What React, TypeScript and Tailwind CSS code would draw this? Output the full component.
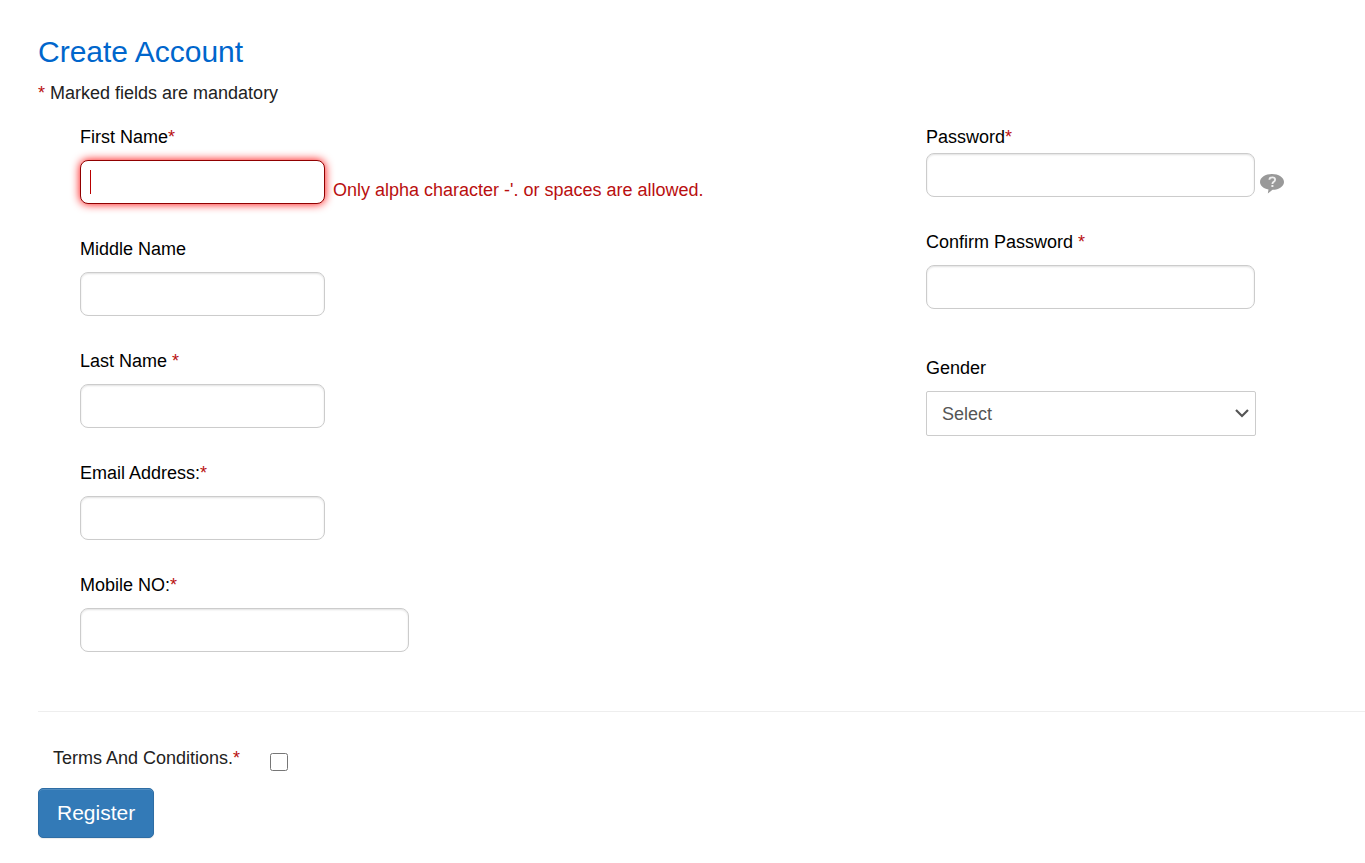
import { useState, type ReactNode } from "react";

const inputBase =
  "block h-11 rounded-lg border bg-white px-[9px] text-lg text-[#555] focus:outline-none";
const inputNormal = "border-[#ccc] shadow-[inset_0_1px_2px_rgba(0,0,0,0.12)]";
const inputError = "border-[#900000] shadow-[0_0_10px_#ff0000]";

function Required() {
  return <span className="text-[#b90f0f]">*</span>;
}

function Label({ id, children }: { id: string; children: ReactNode }) {
  return (
    <label htmlFor={id} className="block text-black">
      {children}
    </label>
  );
}

function HelpIcon() {
  return (
    <svg width="24" height="21" viewBox="0 0 24 21" aria-hidden="true">
      <path
        d="M12 1C5.400 1 0 4.500 0 8.900c0 3.600 3.600 6.600 8.500 7.500L7.800 20.500 12.600 16.800C19 16.600 24 13.200 24 8.900 24 4.500 18.600 1 12 1Z"
        fill="#999"
      />
      <path
        d="M9.400 6.800C9.400 5.300 10.600 4.400 12.200 4.400c1.700 0 2.900 0.900 2.900 2.300 0 2.100-2.700 2-2.700 4.200"
        fill="none"
        stroke="#eee"
        strokeWidth="1.800"
      />
      <rect x="11.400" y="12" width="2" height="2" fill="#eee" />
    </svg>
  );
}

export default function App() {
  const [form, setForm] = useState({
    firstName: "",
    middleName: "",
    lastName: "",
    email: "",
    mobile: "",
    password: "",
    confirm: "",
    gender: "",
  });
  const [accepted, setAccepted] = useState(false);

  function update(name: string, value: string) {
    setForm({ ...form, [name]: value });
  }

  return (
    <form
      onSubmit={(e) => e.preventDefault()}
      className="min-h-screen bg-white pt-[34px] pb-6 pl-[38px] font-['Liberation_Sans',Arial,sans-serif] text-lg leading-[26px] text-[#222]"
    >
      <h1 className="text-[30px] leading-9 text-[#0066cc]">Create Account</h1>
      <p className="mt-2.5">
        <Required /> Marked fields are mandatory
      </p>

      <div className="mt-[18px] grid grid-cols-[1fr_439px] pl-[42px]">
        <div className="flex flex-col gap-8">
          <div className="flex flex-col gap-2.5">
            <Label id="firstName">
              First Name
              <Required />
            </Label>
            <div className="flex items-end gap-2">
              <div className="relative">
                <input
                  id="firstName"
                  type="text"
                  aria-invalid="true"
                  aria-describedby="firstNameError"
                  value={form.firstName}
                  onChange={(e) => update("firstName", e.target.value)}
                  className={`${inputBase} ${inputError} w-[245px]`}
                />
                {form.firstName === "" && (
                  <span className="pointer-events-none absolute top-2.5 left-2.5 h-6 w-px bg-[#b90000]" />
                )}
              </div>
              <span id="firstNameError" className="pb-px text-[#b90f0f]">
                Only alpha character -'. or spaces are allowed.
              </span>
            </div>
          </div>

          <div className="flex flex-col gap-2.5">
            <Label id="middleName">Middle Name</Label>
            <input
              id="middleName"
              type="text"
              value={form.middleName}
              onChange={(e) => update("middleName", e.target.value)}
              className={`${inputBase} ${inputNormal} w-[245px]`}
            />
          </div>

          <div className="flex flex-col gap-2.5">
            <Label id="lastName">
              Last Name <Required />
            </Label>
            <input
              id="lastName"
              type="text"
              value={form.lastName}
              onChange={(e) => update("lastName", e.target.value)}
              className={`${inputBase} ${inputNormal} w-[245px]`}
            />
          </div>

          <div className="flex flex-col gap-2.5">
            <Label id="email">
              Email Address:
              <Required />
            </Label>
            <input
              id="email"
              type="email"
              value={form.email}
              onChange={(e) => update("email", e.target.value)}
              className={`${inputBase} ${inputNormal} w-[245px]`}
            />
          </div>

          <div className="flex flex-col gap-2.5">
            <Label id="mobile">
              Mobile NO:
              <Required />
            </Label>
            <input
              id="mobile"
              type="tel"
              value={form.mobile}
              onChange={(e) => update("mobile", e.target.value)}
              className={`${inputBase} ${inputNormal} w-[329px]`}
            />
          </div>
        </div>

        <div>
          <div className="flex flex-col gap-[3px]">
            <Label id="password">
              Password
              <Required />
            </Label>
            <div className="flex items-end gap-[5px]">
              <input
                id="password"
                type="password"
                value={form.password}
                onChange={(e) => update("password", e.target.value)}
                className={`${inputBase} ${inputNormal} w-[329px]`}
              />
              <button type="button" aria-label="Password help" className="pb-[3px]">
                <HelpIcon />
              </button>
            </div>
          </div>

          <div className="mt-8 flex flex-col gap-2.5">
            <Label id="confirm">
              Confirm Password <Required />
            </Label>
            <input
              id="confirm"
              type="password"
              value={form.confirm}
              onChange={(e) => update("confirm", e.target.value)}
              className={`${inputBase} ${inputNormal} w-[329px]`}
            />
          </div>

          <div className="mt-[46px] flex flex-col gap-2.5">
            <Label id="gender">Gender</Label>
            <div className="relative w-[330px]">
              <select
                id="gender"
                value={form.gender}
                onChange={(e) => update("gender", e.target.value)}
                className="block h-[45px] w-full appearance-none rounded-xs border border-[#ccc] bg-white px-[15px] text-lg text-[#555]"
              >
                <option value="">Select</option>
                <option value="female">Female</option>
                <option value="male">Male</option>
              </select>
              <svg
                className="pointer-events-none absolute top-[18px] right-[7px]"
                width="14"
                height="9"
                viewBox="0 0 14 9"
                fill="none"
                stroke="#555"
                strokeWidth="2.2"
                aria-hidden="true"
              >
                <path d="M1 1l6 6 6-6" />
              </svg>
            </div>
          </div>
        </div>
      </div>

      <hr className="mt-[59px] border-[#eee]" />

      <div className="mt-[33px] flex items-start gap-[30px] pl-[15px]">
        <label htmlFor="terms">
          Terms And Conditions.
          <Required />
        </label>
        <input
          id="terms"
          type="checkbox"
          checked={accepted}
          onChange={(e) => setAccepted(e.target.checked)}
          className="mt-2 size-[18px]"
        />
      </div>

      <button
        type="submit"
        className="mt-[17px] h-[50px] rounded-[5px] border border-[#2e6da4] bg-[#337ab7] px-[18px] text-[21px] text-white shadow-[inset_0_1px_0_rgba(255,255,255,0.15),0_1px_1px_rgba(0,0,0,0.08)]"
      >
        Register
      </button>
    </form>
  );
}
